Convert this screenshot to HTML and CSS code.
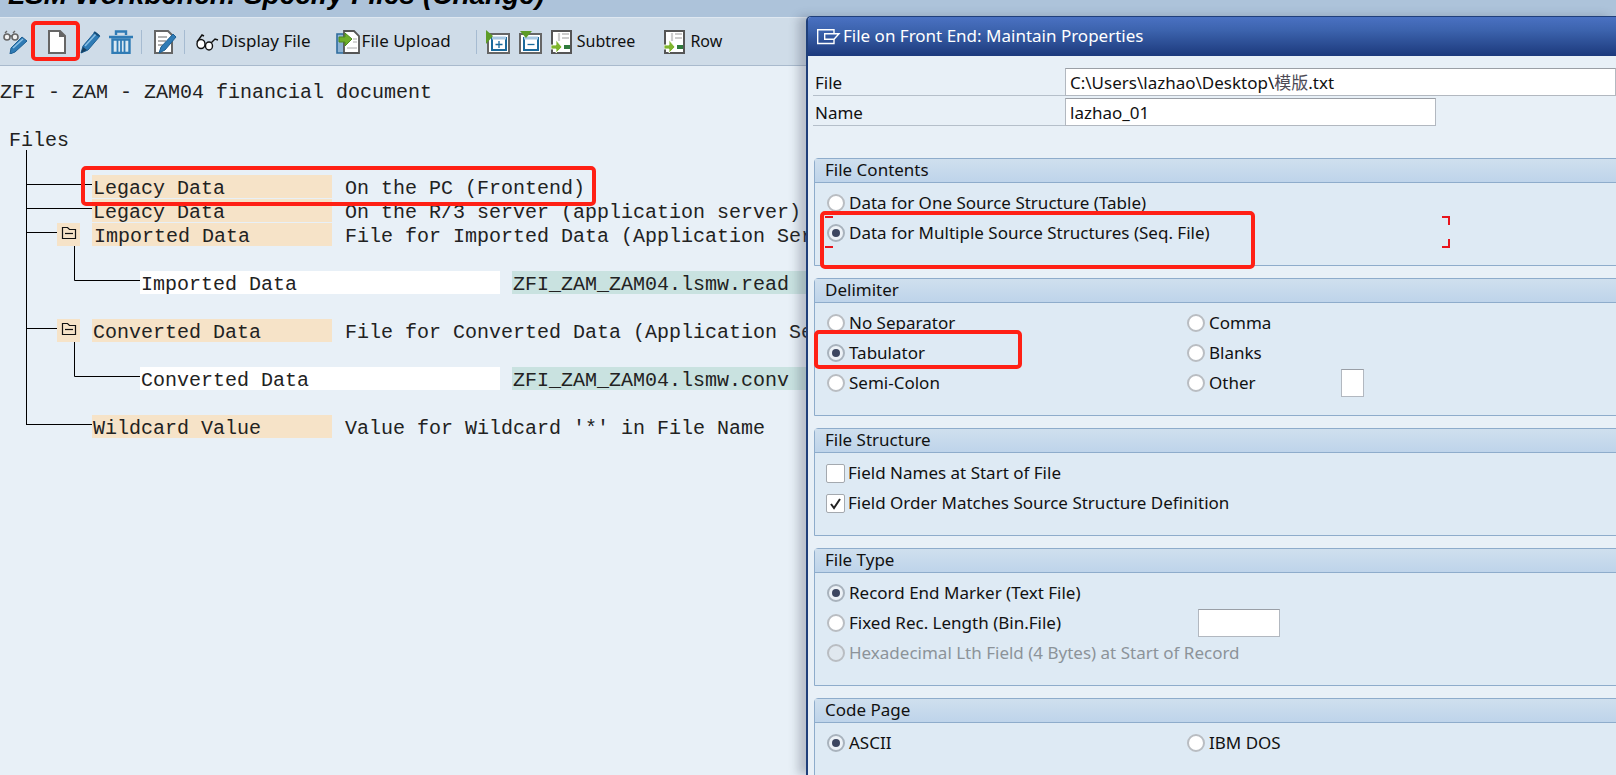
FILE: index.html
```html
<!DOCTYPE html>
<html lang="en">
<head>
<meta charset="utf-8">
<title>LSM Workbench: Specify Files (Change)</title>
<link rel="stylesheet" href="styles.css">
</head>
<body>
<header class="titlebar"><h1 class="title">LSM Workbench: Specify Files (Change)</h1></header>
<nav class="toolbar">
  <svg class="icon i-first" width="24" height="24" viewBox="0 0 24 24"><circle cx="4" cy="7" r="3" fill="#f2f2f2" stroke="#666" stroke-width="1.600"/><circle cx="12" cy="7" r="3" fill="#f2f2f2" stroke="#666" stroke-width="1.600"/><path d="M2 3l2-2M10 3l2-2M7 6h2" stroke="#666" stroke-width="1.400"/><path d="M7 24l1-6L19 7l5 4-12 11z" fill="#2f7bb5" stroke="#1d5f93"/><path d="M10 18l10-9" stroke="#8cc0e4" stroke-width="1.500"/></svg>
  <svg class="icon i-new" width="18" height="24" viewBox="0 0 18 24"><path d="M1 1h11l5 5v17H1z" fill="#fff" stroke="#666" stroke-width="2"/><path d="M11 0v7h7z" fill="#666"/></svg>
  <svg class="icon i-pencil" width="21" height="24" viewBox="0 0 21 24"><path d="M1 23l2-7L15 2l5 4L8 20z" fill="#2f7bb5" stroke="#1d5f93"/><path d="M5 16L16 4" stroke="#8cc0e4" stroke-width="1.500"/><path d="M1 23l2-6 4 3z" fill="#173f5f"/><path d="M14 2l5 4" stroke="#174e7a" stroke-width="2"/></svg>
  <svg class="icon i-trash" width="24" height="24" viewBox="0 0 24 24"><path d="M0 7h24M7 5V1.500h10V5" fill="none" stroke="#2f7bb5" stroke-width="2.400"/><path d="M3.500 9.500h17V23h-17z" fill="#d9e8f2" stroke="#2f7bb5" stroke-width="2.400"/><path d="M8.500 10v12M12 10v12M15.500 10v12" stroke="#2f7bb5" stroke-width="1.800"/></svg>
  <span class="sep sep-a"></span>
  <svg class="icon i-edit" width="23" height="24" viewBox="0 0 23 24"><path d="M1 1h13l4 4v18H1z" fill="#fff" stroke="#666" stroke-width="2"/><path d="M4 7h9M4 11h8M4 15h5" stroke="#999" stroke-width="1.500"/><path d="M5 23l2-6L19 4l3 3L11 20z" fill="#2f7bb5" stroke="#1d5f93"/></svg>
  <span class="sep sep-b"></span>
  <button class="tool tool-display">
    <svg class="icon" width="24" height="18" viewBox="0 0 24 18"><path d="M2 9l5-7 2 1M16 10l4-4 3 1" fill="none" stroke="#111" stroke-width="1.400"/><ellipse cx="6" cy="11" rx="4" ry="4.500" fill="#fff" stroke="#111" stroke-width="1.400"/><ellipse cx="14" cy="13" rx="3.500" ry="4" fill="#fff" stroke="#111" stroke-width="1.400"/></svg>
    <span class="tool-text">Display File</span>
  </button>
  <button class="tool tool-upload">
    <svg class="icon" width="24" height="24" viewBox="0 0 24 24"><path d="M1 4h12v19H1z" fill="#8fb4d4" stroke="#2f6c9d" stroke-width="1.600"/><path d="M8 1h10l5 5v17H8z" fill="#fff" stroke="#555" stroke-width="1.800"/><path d="M17 9h4M17 12h4M11 18h10" stroke="#aaa"/><path d="M3 7h6V3l7 6-7 7v-4H3z" fill="#6fae2a" stroke="#4c8a1c"/></svg>
    <span class="tool-text">File Upload</span>
  </button>
  <span class="sep sep-c"></span>
  <svg class="icon i-exp" width="24" height="24" viewBox="0 0 24 24"><path d="M2 4h21v19H2z" fill="#fff" stroke="#666" stroke-width="2"/><path d="M6 8h14v12H6z" fill="#fff" stroke="#1b6a9c" stroke-width="2"/><path d="M6 8h14" stroke="#a9c8e2" stroke-width="3"/><path d="M13 11v7M9.500 14.500h7" stroke="#1b6a9c" stroke-width="1.300"/><path d="M0 0l7 6-7 8z" fill="#5d9c27"/></svg>
  <svg class="icon i-col" width="23" height="24" viewBox="0 0 23 24"><path d="M1 4h21v19H1z" fill="#fff" stroke="#666" stroke-width="2"/><path d="M5 8h14v12H5z" fill="#fff" stroke="#1b6a9c" stroke-width="2"/><path d="M5 8h14" stroke="#a9c8e2" stroke-width="3"/><path d="M8.500 14.500h7" stroke="#1b6a9c" stroke-width="1.300"/><path d="M1 1h12L7 8z" fill="#5d9c27"/></svg>
  <button class="tool tool-subtree">
    <svg class="icon" width="21" height="24" viewBox="0 0 21 24"><path d="M1 1h19v22H1z" fill="#fff" stroke="#555" stroke-width="2"/><path d="M8 3v8M11 4h7M11 8h7" stroke="#ccc" stroke-width="2.200"/><path d="M13 15h6v4h-6z" fill="#2f7a3d"/><path d="M0 15h5v-5l6 7-6 6v-4H0z" fill="#7fb52d" stroke="#fff" stroke-width=".8"/></svg>
    <span class="tool-text">Subtree</span>
  </button>
  <button class="tool tool-row">
    <svg class="icon" width="21" height="24" viewBox="0 0 21 24"><path d="M1 1h19v22H1z" fill="#fff" stroke="#555" stroke-width="2"/><path d="M8 3v8M11 4h7M11 8h7" stroke="#ccc" stroke-width="2.200"/><path d="M13 15h6v4h-6z" fill="#2f7a3d"/><path d="M0 15h5v-5l6 7-6 6v-4H0z" fill="#7fb52d" stroke="#fff" stroke-width=".8"/></svg>
    <span class="tool-text">Row</span>
  </button>
</nav>

<main class="main">
  <svg class="tree" width="160" height="300" viewBox="0 0 160 300">
    <path d="M26.500 0V274.500M26 34.500H92M26 58.500H92M26 82.500H57M26 178.500H57M26 274.500H92M74.500 96V130.500H140M74.500 192V226.500H140" fill="none" stroke="#000" stroke-width="1"/>
  </svg>
  <div class="row row-top">ZFI - ZAM - ZAM04 financial document</div>
  <div class="gap"></div>
  <div class="row row-files">Files</div>
  <div class="gap"></div>
  <div class="row row-item">
    <span class="label">Legacy Data</span><span class="desc">On the PC (Frontend)</span>
  </div>
  <div class="row row-item">
    <span class="label">Legacy Data</span><span class="desc">On the R/3 server (application server)</span>
  </div>
  <div class="row row-item">
    <span class="chip"><svg width="16" height="14" viewBox="0 0 16 14"><path d="M1.500 12.500V1.500h5l2 2h6v9z" fill="none" stroke="#111" stroke-width="1.200"/><path d="M4 7.500h8" stroke="#111" stroke-width="1.200"/></svg></span>
    <span class="label label-i">Imported Data</span><span class="desc">File for Imported Data (Application Server)</span>
  </div>
  <div class="gap"></div>
  <div class="row row-sub">
    <span class="name">Imported Data</span><span class="value">ZFI_ZAM_ZAM04.lsmw.read</span>
  </div>
  <div class="gap"></div>
  <div class="row row-item">
    <span class="chip"><svg width="16" height="14" viewBox="0 0 16 14"><path d="M1.500 12.500V1.500h5l2 2h6v9z" fill="none" stroke="#111" stroke-width="1.200"/><path d="M4 7.500h8" stroke="#111" stroke-width="1.200"/></svg></span>
    <span class="label">Converted Data</span><span class="desc">File for Converted Data (Application Server)</span>
  </div>
  <div class="gap"></div>
  <div class="row row-sub">
    <span class="name">Converted Data</span><span class="value">ZFI_ZAM_ZAM04.lsmw.conv</span>
  </div>
  <div class="gap"></div>
  <div class="row row-item">
    <span class="label">Wildcard Value</span><span class="desc">Value for Wildcard '*' in File Name</span>
  </div>
</main>

<section class="dialog">
  <div class="dialog-title">
    <svg class="dialog-icon" width="24" height="16" viewBox="0 0 24 16"><path d="M17 4V.7H.7V14.500H17V10.500" fill="none" stroke="#fff" stroke-width="1.400"/><path d="M7.700 4.700H22L17 10.300H7.700z" fill="none" stroke="#fff" stroke-width="1.400"/></svg>
    <span class="dialog-text">File on Front End: Maintain Properties</span>
  </div>
  <div class="dialog-body">
    <div class="field-row">
      <label class="field-label">File</label>
      <div class="input input-file">C:\Users\lazhao\Desktop\<span class="cjk">模版</span>.txt</div>
    </div>
    <div class="field-row">
      <label class="field-label">Name</label>
      <div class="input input-name">lazhao_01</div>
    </div>

    <div class="groups">
      <section class="group">
        <h2 class="group-head">File Contents</h2>
        <div class="group-body">
          <div class="opt"><i class="radio"></i>Data for One Source Structure (Table)</div>
          <div class="opt"><i class="radio on"></i>Data for Multiple Source Structures (Seq. File)</div>
        </div>
      </section>
      <section class="group">
        <h2 class="group-head">Delimiter</h2>
        <div class="group-body grid-2">
          <div class="opt"><i class="radio"></i>No Separator</div>
          <div class="opt"><i class="radio"></i>Comma</div>
          <div class="opt"><i class="radio on"></i>Tabulator</div>
          <div class="opt"><i class="radio"></i>Blanks</div>
          <div class="opt"><i class="radio"></i>Semi-Colon</div>
          <div class="opt opt-other"><i class="radio"></i>Other<div class="input input-other"></div></div>
        </div>
      </section>
      <section class="group">
        <h2 class="group-head">File Structure</h2>
        <div class="group-body">
          <div class="opt"><i class="check"></i>Field Names at Start of File</div>
          <div class="opt"><i class="check on"><svg width="15" height="15" viewBox="0 0 15 15"><path d="M3 8l3 4 6-9" fill="none" stroke="#222" stroke-width="2"/></svg></i>Field Order Matches Source Structure Definition</div>
        </div>
      </section>
      <section class="group">
        <h2 class="group-head">File Type</h2>
        <div class="group-body">
          <div class="opt"><i class="radio on"></i>Record End Marker (Text File)</div>
          <div class="opt opt-fixed"><i class="radio"></i><span class="opt-text">Fixed Rec. Length (Bin.File)</span><div class="input input-len"></div></div>
          <div class="opt disabled"><i class="radio"></i>Hexadecimal Lth Field (4 Bytes) at Start of Record</div>
        </div>
      </section>
      <section class="group">
        <h2 class="group-head">Code Page</h2>
        <div class="group-body grid-2">
          <div class="opt"><i class="radio on"></i>ASCII</div>
          <div class="opt"><i class="radio"></i>IBM DOS</div>
        </div>
      </section>
    </div>
  </div>
</section>

<div class="mark mark-new"></div>
<div class="mark mark-legacy"></div>
<div class="mark mark-multi"></div>
<div class="mark mark-tab"></div>
<i class="tick tick-lt"></i>
<i class="tick tick-lb"></i>
<i class="tick tick-rt"></i>
<i class="tick tick-rb"></i>
</body>
</html>
```

FILE: styles.css
```css
* { box-sizing: border-box; }
html, body { margin: 0; height: 100%; }
body {
  position: relative;
  width: 1616px;
  height: 775px;
  overflow: hidden;
  background: #e8f0f7;
  font-family: "Noto Sans", "Liberation Sans", sans-serif;
  font-size: 17px;
  color: #111;
}

/* Window title, cut by the top of the screenshot */
.titlebar {
  height: 17px;
  background: #adc3da;
  overflow: hidden;
  display: flex;
  align-items: flex-end;
  padding: 0 0 7px 8px;
}
.title {
  margin: 0;
  font-family: "Liberation Sans", Arial, sans-serif;
  font-size: 28px;
  line-height: 30px;
  font-weight: 700;
  font-style: italic;
  white-space: nowrap;
  color: #000;
}

/* Toolbar */
.toolbar {
  height: 49px;
  background: #cfdce8;
  border-top: 1px solid #dfe8f1;
  border-bottom: 1px solid #a9bacd;
  display: flex;
  align-items: center;
}
.icon { flex: none; display: block; }
.i-first { margin-left: 3px; }
.i-new { margin-left: 21px; }
.i-pencil { margin-left: 14px; }
.i-trash { margin-left: 8px; }
.sep { flex: none; width: 1px; height: 24px; background: #a6bbd1; }
.sep-a { margin-left: 8px; }
.i-edit { margin-left: 12px; }
.sep-b { margin-left: 7px; }
.tool {
  flex: none;
  display: flex;
  align-items: center;
  gap: 2px;
  padding: 0;
  border: 0;
  background: none;
  font: inherit;
  color: #111;
}
.tool-text { padding-bottom: 2px; }
.tool-display { margin-left: 10px; }
.tool-upload { margin-left: 25px; }
.sep-c { margin-left: 25px; }
.i-exp { margin-left: 9px; }
.i-col { margin-left: 9px; }
.tool-subtree { margin-left: 9px; gap: 5px; font-size: 16px; }
.tool-row { margin-left: 29px; gap: 5px; font-size: 16px; }

/* Left tree */
.main {
  position: relative;
  padding-top: 13px;
  font-family: "Liberation Mono", monospace;
  font-size: 20px;
  color: #222;
}
.tree {
  position: absolute;
  left: 0;
  top: 84px;
}
.row {
  height: 24px;
  line-height: 27px;
  white-space: pre;
}
.gap { height: 24px; }
.row-top { margin-left: 0; }
.row-files { padding-left: 9px; }
.row-item {
  display: grid;
  grid-template-columns: 57px 23px 12px 240px 13px 1fr;
}
.chip {
  grid-column: 2;
  height: 23px;
  background: #f6e3c8;
  display: flex;
  align-items: flex-start;
  justify-content: center;
  padding-top: 3px;
}
.label {
  grid-column: 4;
  height: 23px;
  background: #f6e3c8;
  padding-left: 1px;
}
.label-i { padding-left: 2px; }
.desc { grid-column: 6; }
.row-sub {
  display: grid;
  grid-template-columns: 140px 360px 12px 1fr;
}
.name { grid-column: 2; height: 23px; background: #fff; padding-left: 1px; }
.value { grid-column: 4; height: 23px; background: #c9e2e0; padding-left: 1px; }

/* Dialog window */
.dialog {
  position: absolute;
  left: 806px;
  top: 16px;
  right: 0;
  bottom: 0;
  border-left: 2px solid #1f3f7a;
  border-top: 1px solid #1f3f7a;
  border-top-left-radius: 5px;
  background: #e8f0f7;
  box-shadow: -8px 0 10px rgba(60, 70, 90, .28);
  overflow: hidden;
}
.dialog-title {
  height: 39px;
  background: linear-gradient(#4a71c2, #3c63ad 35%, #1c397c);
  color: #fff;
  display: flex;
  align-items: center;
  gap: 2px;
  padding-left: 9px;
  white-space: nowrap;
}
.dialog-icon { flex: none; }
.dialog-text { padding-bottom: 2px; }
.dialog-body { padding: 12px 0 0 5px; }
.field-row { display: flex; height: 30px; }
.field-label {
  width: 252px;
  height: 28px;
  line-height: 29px;
  padding-left: 2px;
  border-bottom: 1px solid #b5bfca;
}
.input {
  background: #fff;
  border: 1px solid #b2b8c0;
  border-top-color: #9a9fa6;
}
.input-file { flex: 1; height: 28px; line-height: 26px; padding-left: 4px; white-space: nowrap; }
.input-name { width: 371px; height: 28px; line-height: 27px; padding-left: 4px; }
.cjk { font-family: "Noto Sans CJK SC", sans-serif; color: #4d4a55; }

.groups {
  margin: 30px -12px 0 1px;
  display: flex;
  flex-direction: column;
  gap: 12px;
}
.group {
  border: 1px solid #8eaccb;
  border-radius: 4px 4px 0 0;
  background: #deeaf4;
  padding-bottom: 17px;
}
.group-head {
  margin: 0;
  height: 24px;
  line-height: 22px;
  padding-left: 10px;
  font-size: 17px;
  font-weight: 400;
  background: linear-gradient(#cfdfee, #bed4ea);
  border-bottom: 1px solid #8eaccb;
}
.group-body { padding: 5px 0 0 12px; }
.grid-2 { display: grid; grid-template-columns: 360px 1fr; }
.opt { height: 30px; padding-bottom: 2px; display: flex; align-items: center; gap: 4px; white-space: nowrap; }
.opt.disabled { color: #8c9399; }
.radio {
  flex: none;
  width: 18px;
  height: 18px;
  margin-top: 2px;
  border-radius: 50%;
  background: #fff;
  border: 2px solid #b9bdc2;
  position: relative;
}
.radio.on { background: #edf2f7; border-color: #a9b3bd; }
.radio.on::after {
  content: "";
  position: absolute;
  left: 3px;
  top: 3px;
  width: 8px;
  height: 8px;
  border-radius: 50%;
  background: #3d4660;
}
.disabled .radio { background: #e0e8ef; }
.check {
  flex: none;
  width: 19px;
  height: 19px;
  margin: 2px -1px 0;
  background: #fff;
  border: 1px solid #a4a9af;
  border-radius: 2px;
  display: flex;
  align-items: center;
  justify-content: center;
}
.opt-other { width: 177px; }
.input-other { width: 23px; height: 28px; margin: 2px 0 0 auto; }
.opt-text { width: 345px; }
.input-len { width: 82px; height: 28px; margin-top: 2px; }

/* Red annotations drawn over the screenshot */
.mark {
  position: absolute;
  border: 4px solid #ff2015;
  border-radius: 5px;
  z-index: 5;
}
.mark-new { left: 31px; top: 21px; width: 49px; height: 40px; }
.mark-legacy { left: 81px; top: 166px; width: 515px; height: 40px; }
.mark-multi { left: 820px; top: 211px; width: 435px; height: 58px; }
.mark-tab { left: 814px; top: 330px; width: 208px; height: 39px; }
.tick { position: absolute; width: 8px; height: 9px; z-index: 4; }
.tick-lt { left: 825px; top: 216px; border-top: 2px solid #e8141c; }
.tick-lb { left: 825px; top: 239px; border-bottom: 2px solid #e8141c; }
.tick-rt { left: 1442px; top: 216px; border-top: 2px solid #e8141c; border-right: 2px solid #e8141c; }
.tick-rb { left: 1442px; top: 239px; border-bottom: 2px solid #e8141c; border-right: 2px solid #e8141c; }
```
